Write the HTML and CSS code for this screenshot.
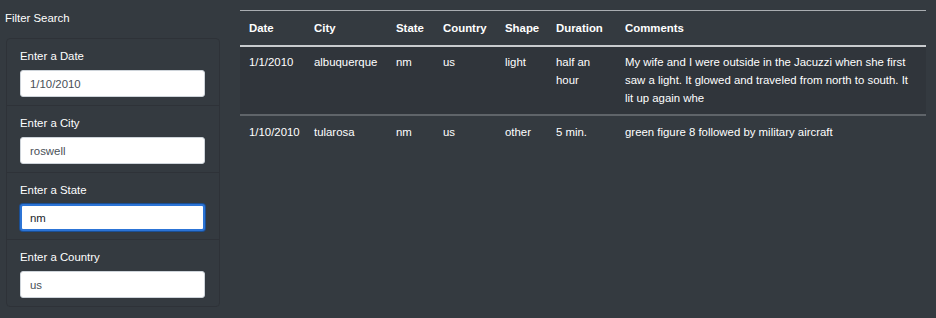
FILE: index.html
```html
<!DOCTYPE html>
<html lang="en">
<head>
    <meta charset="UTF-8">
    <meta name="viewport" content="width=device-width, initial-scale=1.0">
    <title>UFO Sightings</title>
    <link rel="stylesheet" href="styles.css">
</head>
<body>

    <div class="page">
        <aside class="filters">
            <div class="filters-title">Filter Search</div>
            <ul class="filter-list">
                <li class="filter-item">
                    <label for="datetime">Enter a Date</label>
                    <input type="text" id="datetime" value="1/10/2010">
                </li>
                <li class="filter-item">
                    <label for="city">Enter a City</label>
                    <input type="text" id="city" value="roswell">
                </li>
                <li class="filter-item">
                    <label for="state">Enter a State</label>
                    <input type="text" id="state" class="focused" value="nm">
                </li>
                <li class="filter-item">
                    <label for="country">Enter a Country</label>
                    <input type="text" id="country" value="us">
                </li>
            </ul>
        </aside>

        <main class="results">
            <table class="ufo-table">
                <thead>
                    <tr>
                        <th class="col-date">Date</th>
                        <th class="col-city">City</th>
                        <th class="col-state">State</th>
                        <th class="col-country">Country</th>
                        <th class="col-shape">Shape</th>
                        <th class="col-duration">Duration</th>
                        <th>Comments</th>
                    </tr>
                </thead>
                <tbody>
                    <tr class="striped">
                        <td>1/1/2010</td>
                        <td>albuquerque</td>
                        <td>nm</td>
                        <td>us</td>
                        <td>light</td>
                        <td>half an hour</td>
                        <td>My wife and I were outside in the Jacuzzi when she first saw a light. It glowed and traveled from north to south. It lit up again whe</td>
                    </tr>
                    <tr>
                        <td>1/10/2010</td>
                        <td>tularosa</td>
                        <td>nm</td>
                        <td>us</td>
                        <td>other</td>
                        <td>5 min.</td>
                        <td>green figure 8 followed by military aircraft</td>
                    </tr>
                </tbody>
            </table>
        </main>
    </div>

</body>
</html>
```

FILE: styles.css
```css
body {
    margin: 0;
    background-color: #343a40;
    color: #ffffff;
    font-family: 'Liberation Sans', Arial, sans-serif;
    font-size: 11.4px;
    line-height: 18px;
}
.page {
    display: flex;
    align-items: flex-start;
    padding: 0 10px 0 5px;
}
.filters {
    width: 215px;
    flex-shrink: 0;
}
.filters-title {
    padding-top: 9px;
    height: 29px;
}
.filter-list {
    list-style: none;
    margin: 0 0 0 1px;
    padding: 0;
    border: 1px solid #2e3238;
    border-radius: 4px;
}
.filter-item {
    display: flex;
    flex-direction: column;
    padding: 8px 13px 8px 13px;
    border-top: 1px solid #2e3238;
}
.filter-item:first-child {
    border-top: none;
}
.filter-item label {
    margin-bottom: 5px;
}
.filter-item input {
    box-sizing: border-box;
    width: 185px;
    height: 27px;
    padding: 0 9px;
    font-family: inherit;
    font-size: 11.4px;
    color: #495057;
    background-color: #ffffff;
    border: 1px solid #ced4da;
    border-radius: 3px;
}
.filter-item input.focused {
    border: 2px solid #2c74d6;
    padding: 0 8px;
    color: #212529;
    box-shadow: 0 0 0 1px #1b4f94;
    outline: none;
}
.results {
    flex: 1;
    margin-left: 20px;
    padding-top: 10px;
}
.ufo-table {
    width: 100%;
    border-collapse: collapse;
    table-layout: fixed;
}
.ufo-table th,
.ufo-table td {
    text-align: left;
    vertical-align: top;
    padding: 8px 9px;
}
.ufo-table th {
    font-weight: bold;
    white-space: nowrap;
    border-top: 1px solid #a9adb1;
    border-bottom: 2px solid #c8cbce;
}
.ufo-table td {
    padding-top: 6px;
    padding-bottom: 7px;
}
.ufo-table tbody tr + tr td {
    border-top: 2px solid #5f6469;
    padding-top: 7px;
}
.ufo-table tr.striped td {
    background-color: #30353b;
}
.ufo-table td:first-child {
    white-space: nowrap;
}
.col-date { width: 47px; }
.col-city { width: 64px; }
.col-state { width: 29px; }
.col-country { width: 44px; }
.col-shape { width: 33px; }
.col-duration { width: 51px; }
```
